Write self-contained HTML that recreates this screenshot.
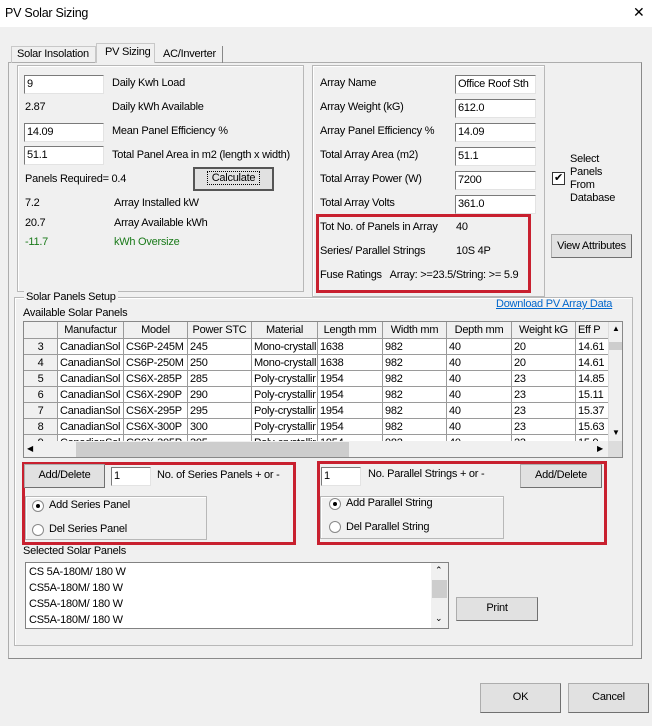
<!DOCTYPE html>
<html><head><style>
*{box-sizing:border-box;margin:0;padding:0}
body{width:652px;height:726px;background:#f0f0f0;font-family:"Liberation Sans",sans-serif;font-size:11px;letter-spacing:-0.25px;color:#000;position:relative;overflow:hidden}
.a{position:absolute;white-space:nowrap;font-size:11px}
.tb{position:absolute;left:0;top:0;width:652px;height:27px;background:#fff}
.grp{position:absolute;border:1px solid #b8b8b8;box-shadow:inset 1px 1px 0 #fff}
.in{position:absolute;background:#fff;border:1px solid #7a7a7a;border-right-color:#e3e3e3;border-bottom-color:#e3e3e3;padding:1px 2px;font-size:11px;line-height:15px;height:19px;white-space:nowrap;overflow:hidden}
.btn{position:absolute;background:#e1e1e1;border:1px solid #adadad;border-right-color:#707070;border-bottom-color:#707070;text-align:center;font-size:11px}
.red{position:absolute;border:3px solid #c8202f}
table{border-collapse:collapse;position:absolute;font-size:11px;background:#fff}
td{border:1px solid #9a9a9a;height:16px;padding:0 2px;white-space:nowrap;overflow:hidden;line-height:14px}
th{border:1px solid #9a9a9a;height:17px;font-weight:normal;background:#f0f0f0;white-space:nowrap;overflow:hidden;padding:0 2px}
td.n{background:#f0f0f0;text-align:center}
.rad{position:absolute;width:12px;height:12px;border-radius:50%;border:1px solid #888;background:#fff}
.dot{margin:3px;width:4px;height:4px;border-radius:50%;background:#000}
</style></head><body>
<div class="tb"></div>
<div class="a" style="left:5px;top:6px;font-size:12.5px">PV Solar Sizing</div>
<div class="a" style="left:633px;top:4px;font-size:14px">✕</div>

<div class="a" style="left:8px;top:62px;width:634px;height:597px;border:1px solid #adadad;border-right-color:#8a8a8a;border-bottom-color:#8a8a8a;background:#f0f0f0"></div>
<div class="a" style="left:11px;top:46px;width:85px;height:17px;border:1px solid #c8c8c8;border-bottom:none"></div>
<div class="a" style="left:17px;top:48px">Solar Insolation</div>
<div class="a" style="left:96px;top:43px;width:59px;height:20px;border:1px solid #c8c8c8;border-bottom:none;background:#f0f0f0"></div>
<div class="a" style="left:105px;top:46px">PV Sizing</div>
<div class="a" style="left:155px;top:46px;width:68px;height:17px;border-right:1px solid #888"></div>
<div class="a" style="left:163px;top:48px">AC/Inverter</div>

<div class="grp" style="left:17px;top:65px;width:287px;height:227px"></div>
<div class="in" style="left:24px;top:75px;width:80px">9</div>
<div class="a" style="left:112px;top:77px">Daily Kwh Load</div>
<div class="a" style="left:25px;top:101px">2.87</div>
<div class="a" style="left:112px;top:101px">Daily kWh Available</div>
<div class="in" style="left:24px;top:123px;width:80px">14.09</div>
<div class="a" style="left:112px;top:125px">Mean Panel Efficiency %</div>
<div class="in" style="left:24px;top:146px;width:80px">51.1</div>
<div class="a" style="left:112px;top:149px">Total Panel Area in m2 (length x width)</div>
<div class="a" style="left:25px;top:173px">Panels Required= 0.4</div>
<div class="btn" style="left:193px;top:167px;width:81px;height:24px;border:2px solid #555;line-height:19px"><span style="outline:1px dotted #000;padding:0 4px">Calculate</span></div>
<div class="a" style="left:25px;top:197px">7.2</div>
<div class="a" style="left:114px;top:197px">Array Installed kW</div>
<div class="a" style="left:25px;top:217px">20.7</div>
<div class="a" style="left:114px;top:217px">Array Available kWh</div>
<div class="a" style="left:25px;top:236px;color:#1a7a1a">-11.7</div>
<div class="a" style="left:114px;top:236px;color:#1a7a1a">kWh Oversize</div>

<div class="grp" style="left:312px;top:65px;width:233px;height:232px"></div>
<div class="a" style="left:320px;top:77px">Array Name</div>
<div class="in" style="left:455px;top:75px;width:81px">Office Roof Sth</div>
<div class="a" style="left:320px;top:101px">Array Weight (kG)</div>
<div class="in" style="left:455px;top:99px;width:81px">612.0</div>
<div class="a" style="left:320px;top:125px">Array Panel Efficiency %</div>
<div class="in" style="left:455px;top:123px;width:81px">14.09</div>
<div class="a" style="left:320px;top:149px">Total Array Area (m2)</div>
<div class="in" style="left:455px;top:147px;width:81px">51.1</div>
<div class="a" style="left:320px;top:173px">Total Array Power (W)</div>
<div class="in" style="left:455px;top:171px;width:81px">7200</div>
<div class="a" style="left:320px;top:197px">Total Array Volts</div>
<div class="in" style="left:455px;top:195px;width:81px">361.0</div>
<div class="red" style="left:316px;top:214px;width:215px;height:79px"></div>
<div class="a" style="left:320px;top:221px">Tot No. of Panels in Array</div>
<div class="a" style="left:456px;top:221px">40</div>
<div class="a" style="left:320px;top:245px">Series/ Parallel Strings</div>
<div class="a" style="left:456px;top:245px">10S 4P</div>
<div class="a" style="left:320px;top:269px">Fuse Ratings &nbsp; Array: &gt;=23.5/String: &gt;= 5.9</div>

<div class="a" style="left:552px;top:172px;width:13px;height:13px;border:1px solid #333;background:#fff;font-size:11px;line-height:11px;text-align:center">✔</div>
<div class="a" style="left:570px;top:153px;line-height:13px">Select<br>Panels<br>From<br>Database</div>
<div class="btn" style="left:551px;top:234px;width:81px;height:24px;line-height:22px">View Attributes</div>

<div class="grp" style="left:14px;top:297px;width:619px;height:349px"></div>
<div class="a" style="left:24px;top:291px;background:#f0f0f0;padding:0 2px">Solar Panels Setup</div>
<div class="a" style="left:496px;top:298px;color:#0066cc;text-decoration:underline">Download PV Array Data</div>
<div class="a" style="left:23px;top:307px">Available Solar Panels</div>
<div class="a" style="left:23px;top:321px;width:600px;height:137px;border:1px solid #888;background:#fff;overflow:hidden">
<table style="left:-1px;top:-1px;table-layout:fixed;width:587px">
<colgroup><col style="width:34px"><col style="width:66px"><col style="width:64px"><col style="width:64px"><col style="width:66px"><col style="width:65px"><col style="width:64px"><col style="width:65px"><col style="width:64px"><col style="width:35px"></colgroup>
<tr><th></th><th>Manufactur</th><th>Model</th><th>Power STC</th><th>Material</th><th>Length mm</th><th>Width mm</th><th>Depth mm</th><th>Weight kG</th><th style="text-align:left">Eff P</th></tr>
<tr><td class="n">3</td><td>CanadianSol</td><td>CS6P-245M</td><td>245</td><td>Mono-crystall</td><td>1638</td><td>982</td><td>40</td><td>20</td><td>14.61</td></tr>
<tr><td class="n">4</td><td>CanadianSol</td><td>CS6P-250M</td><td>250</td><td>Mono-crystall</td><td>1638</td><td>982</td><td>40</td><td>20</td><td>14.61</td></tr>
<tr><td class="n">5</td><td>CanadianSol</td><td>CS6X-285P</td><td>285</td><td>Poly-crystallir</td><td>1954</td><td>982</td><td>40</td><td>23</td><td>14.85</td></tr>
<tr><td class="n">6</td><td>CanadianSol</td><td>CS6X-290P</td><td>290</td><td>Poly-crystallir</td><td>1954</td><td>982</td><td>40</td><td>23</td><td>15.11</td></tr>
<tr><td class="n">7</td><td>CanadianSol</td><td>CS6X-295P</td><td>295</td><td>Poly-crystallir</td><td>1954</td><td>982</td><td>40</td><td>23</td><td>15.37</td></tr>
<tr><td class="n">8</td><td>CanadianSol</td><td>CS6X-300P</td><td>300</td><td>Poly-crystallir</td><td>1954</td><td>982</td><td>40</td><td>23</td><td>15.63</td></tr>
<tr><td class="n">9</td><td>CanadianSol</td><td>CS6X-305P</td><td>305</td><td>Poly-crystallir</td><td>1954</td><td>982</td><td>40</td><td>23</td><td>15.9</td></tr>
</table>
<div class="a" style="left:584px;top:0;width:16px;height:120px;background:#f0f0f0;border-left:1px solid #ddd"></div>
<div class="a" style="left:588px;top:2px;font-size:8px">▲</div>
<div class="a" style="left:585px;top:20px;width:14px;height:8px;background:#cdcdcd"></div>
<div class="a" style="left:588px;top:106px;font-size:8px">▼</div>
<div class="a" style="left:0;top:119px;width:600px;height:17px;background:#f0f0f0"></div>
<div class="a" style="left:3px;top:122px;font-size:8px">◀</div>
<div class="a" style="left:52px;top:120px;width:273px;height:15px;background:#cdcdcd"></div>
<div class="a" style="left:573px;top:122px;font-size:8px">▶</div>
<div class="a" style="left:584px;top:119px;width:16px;height:17px;background:#dcdcdc"></div>
</div>

<!-- series -->
<div class="red" style="left:22px;top:462px;width:274px;height:83px"></div>
<div class="btn" style="left:24px;top:464px;width:81px;height:24px;line-height:20px">Add/Delete</div>
<div class="in" style="left:111px;top:467px;width:40px">1</div>
<div class="a" style="left:157px;top:469px">No. of Series Panels + or -</div>
<div class="grp" style="left:25px;top:496px;width:182px;height:44px"></div>
<div class="rad" style="left:32px;top:500px"><div class="dot"></div></div>
<div class="a" style="left:49px;top:499px">Add Series Panel</div>
<div class="rad" style="left:32px;top:524px"></div>
<div class="a" style="left:49px;top:523px">Del Series Panel</div>

<!-- parallel -->
<div class="red" style="left:317px;top:461px;width:290px;height:84px"></div>
<div class="in" style="left:321px;top:467px;width:40px">1</div>
<div class="a" style="left:368px;top:468px">No. Parallel Strings + or -</div>
<div class="btn" style="left:520px;top:464px;width:82px;height:24px;line-height:20px">Add/Delete</div>
<div class="grp" style="left:320px;top:496px;width:184px;height:43px"></div>
<div class="rad" style="left:329px;top:498px"><div class="dot"></div></div>
<div class="a" style="left:346px;top:497px">Add Parallel String</div>
<div class="rad" style="left:329px;top:521px"></div>
<div class="a" style="left:346px;top:521px">Del Parallel String</div>

<div class="a" style="left:23px;top:545px">Selected Solar Panels</div>
<div class="a" style="left:25px;top:562px;width:424px;height:67px;background:#fff;border:1px solid #828282;line-height:16px;padding:1px 3px;overflow:hidden">CS 5A-180M/ 180 W<br>CS5A-180M/ 180 W<br>CS5A-180M/ 180 W<br>CS5A-180M/ 180 W</div>
<div class="a" style="left:431px;top:563px;width:17px;height:65px;background:#f0f0f0"></div>
<div class="a" style="left:435px;top:565px;font-size:9px">⌃</div>
<div class="a" style="left:432px;top:580px;width:15px;height:18px;background:#cdcdcd"></div>
<div class="a" style="left:435px;top:613px;font-size:9px">⌄</div>
<div class="btn" style="left:456px;top:597px;width:82px;height:24px;line-height:20px">Print</div>

<div class="btn" style="left:480px;top:683px;width:81px;height:30px;line-height:26px">OK</div>
<div class="btn" style="left:568px;top:683px;width:81px;height:30px;line-height:26px">Cancel</div>
</body></html>
